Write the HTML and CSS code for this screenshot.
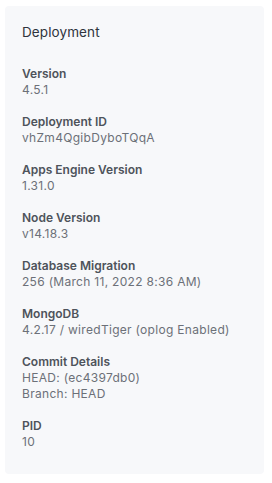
FILE: index.html
```html
<!DOCTYPE html>
<html lang="en">
<head>
  <meta charset="UTF-8" />
  <title>Deployment</title>
  <link rel="stylesheet" href="styles.css">
</head>
<body>

  <div class="panel">
    <div class="panel-title">Deployment</div>

    <div class="info-list">
      <div class="info-item">
        <div class="info-label">Version</div>
        <div class="info-value">4.5.1</div>
      </div>
      <div class="info-item">
        <div class="info-label">Deployment ID</div>
        <div class="info-value">vhZm4QgibDyboTQqA</div>
      </div>
      <div class="info-item">
        <div class="info-label">Apps Engine Version</div>
        <div class="info-value">1.31.0</div>
      </div>
      <div class="info-item">
        <div class="info-label">Node Version</div>
        <div class="info-value">v14.18.3</div>
      </div>
      <div class="info-item">
        <div class="info-label">Database Migration</div>
        <div class="info-value">256 (March 11, 2022 8:36 AM)</div>
      </div>
      <div class="info-item">
        <div class="info-label">MongoDB</div>
        <div class="info-value">4.2.17 / wiredTiger (oplog Enabled)</div>
      </div>
      <div class="info-item">
        <div class="info-label">Commit Details</div>
        <div class="info-value">HEAD: (ec4397db0)</div>
        <div class="info-value">Branch: HEAD</div>
      </div>
      <div class="info-item">
        <div class="info-label">PID</div>
        <div class="info-value">10</div>
      </div>
    </div>
  </div>

</body>
</html>
```

FILE: styles.css
```css
body {
  font-family: 'Inter', sans-serif;
  background: #fff;
  margin: 0;
  padding: 6px 8px 10px 5px;
  color: #2f343d;
}

.panel {
  background: #f7f8fa;
  border-radius: 4px;
  padding: 16px 17px 24px;
}

.panel-title {
  font-size: 13.5px;
  line-height: 20px;
  letter-spacing: 0.1px;
  color: #2f343d;
  margin-bottom: 24px;
}

.info-list {
  display: flex;
  flex-direction: column;
  gap: 16px;
}

.info-label {
  font-size: 12px;
  line-height: 16px;
  font-weight: 600;
  color: #4e535b;
}

.info-value {
  font-size: 12px;
  line-height: 16px;
  letter-spacing: 0.3px;
  color: #6c7078;
}
```
